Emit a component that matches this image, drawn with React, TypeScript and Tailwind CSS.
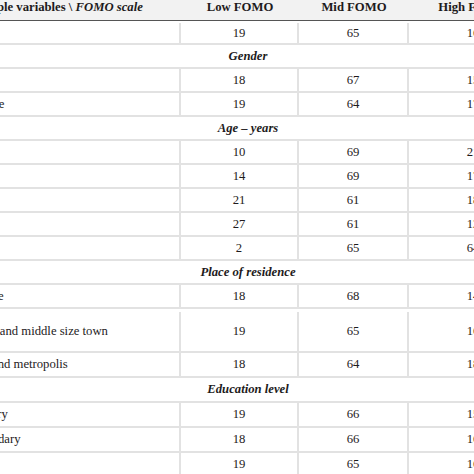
type Row =
  | { kind: 'data'; label: string; low: string; mid: string; high: string; tall?: boolean; h?: string }
  | { kind: 'group'; label: string; h?: string };

const rows: Row[] = [
  { kind: 'data', label: 'Total', low: '19', mid: '65', high: '16', h: 'h-[24px] pt-[2px]' },
  { kind: 'group', label: 'Gender' },
  { kind: 'data', label: 'Male', low: '18', mid: '67', high: '15' },
  { kind: 'data', label: 'Female', low: '19', mid: '64', high: '17' },
  { kind: 'group', label: 'Age – years' },
  { kind: 'data', label: '18–24', low: '10', mid: '69', high: '21' },
  { kind: 'data', label: '25–34', low: '14', mid: '69', high: '17' },
  { kind: 'data', label: '35–44', low: '21', mid: '61', high: '18' },
  { kind: 'data', label: '45–54', low: '27', mid: '61', high: '12' },
  { kind: 'data', label: '55+', low: '2', mid: '65', high: '64' },
  { kind: 'group', label: 'Place of residence' },
  { kind: 'data', label: 'Village', low: '18', mid: '68', high: '14' },
  { kind: 'data', label: 'Small and middle size town', low: '19', mid: '65', high: '16', tall: true },
  { kind: 'data', label: 'City and metropolis', low: '18', mid: '64', high: '18', h: 'h-[25px]' },
  { kind: 'group', label: 'Education level', h: 'h-[25px]' },
  { kind: 'data', label: 'Primary', low: '19', mid: '66', high: '15', h: 'h-[25px]' },
  { kind: 'data', label: 'Secondary', low: '18', mid: '66', high: '16', h: 'h-[25px]' },
  { kind: 'data', label: 'Other', low: '19', mid: '65', high: '16', h: 'h-[25px]' },
];

const cols = 'grid grid-cols-[222px_118px_110px_128px]';

export default function App() {
  return (
    <div
      className="w-[474px] h-[474px] overflow-hidden bg-white text-[#1e1b1c] text-[12.7px] leading-none"
      style={{ fontFamily: '"Liberation Serif", "Times New Roman", serif' }}
    >
      <div className="w-[578px] -ml-[41px] -mt-[6px]">
        {/* header */}
        <div className={`${cols} h-[27px] items-center bg-[#f2f2f2] border-b border-[#555] font-bold`}>
          <div className="pl-[14px] whitespace-nowrap">
            Sample variables \ <span className="italic">FOMO scale</span>
          </div>
          <div className="text-center">Low FOMO</div>
          <div className="text-center">Mid FOMO</div>
          <div className="text-center">High FOMO</div>
        </div>

        {rows.map((r, i) =>
          r.kind === 'group' ? (
            <div
              key={i}
              className={`${r.h ?? 'h-[24px]'} flex items-center justify-center border-b-2 border-[#e2e2e2] font-bold italic`}
            >
              {r.label}
            </div>
          ) : (
            <div
              key={i}
              className={`${cols} ${r.tall ? 'h-[44px] pt-[3px]' : r.h ?? 'h-[24px]'} border-b-2 border-[#e2e2e2]`}
            >
              <div className="flex items-center pl-[8px] whitespace-nowrap border-r-2 border-[#e2e2e2]">{r.label}</div>
              <div className="flex items-center justify-center border-r-2 border-[#e2e2e2]">{r.low}</div>
              <div className="flex items-center justify-center border-r-2 border-[#e2e2e2]">{r.mid}</div>
              <div className="flex items-center justify-center">{r.high}</div>
            </div>
          )
        )}
      </div>
    </div>
  );
}
